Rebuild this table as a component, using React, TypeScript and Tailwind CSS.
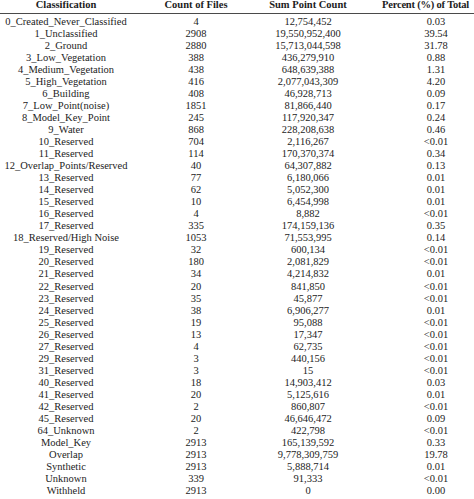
const rows: [string, string, string, string][] = [
  ["0_Created_Never_Classified", "4", "12,754,452", "0.03"],
  ["1_Unclassified", "2908", "19,550,952,400", "39.54"],
  ["2_Ground", "2880", "15,713,044,598", "31.78"],
  ["3_Low_Vegetation", "388", "436,279,910", "0.88"],
  ["4_Medium_Vegetation", "438", "648,639,388", "1.31"],
  ["5_High_Vegetation", "416", "2,077,043,309", "4.20"],
  ["6_Building", "408", "46,928,713", "0.09"],
  ["7_Low_Point(noise)", "1851", "81,866,440", "0.17"],
  ["8_Model_Key_Point", "245", "117,920,347", "0.24"],
  ["9_Water", "868", "228,208,638", "0.46"],
  ["10_Reserved", "704", "2,116,267", "<0.01"],
  ["11_Reserved", "114", "170,370,374", "0.34"],
  ["12_Overlap_Points/Reserved", "40", "64,307,882", "0.13"],
  ["13_Reserved", "77", "6,180,066", "0.01"],
  ["14_Reserved", "62", "5,052,300", "0.01"],
  ["15_Reserved", "10", "6,454,998", "0.01"],
  ["16_Reserved", "4", "8,882", "<0.01"],
  ["17_Reserved", "335", "174,159,136", "0.35"],
  ["18_Reserved/High Noise", "1053", "71,553,995", "0.14"],
  ["19_Reserved", "32", "600,134", "<0.01"],
  ["20_Reserved", "180", "2,081,829", "<0.01"],
  ["21_Reserved", "34", "4,214,832", "0.01"],
  ["22_Reserved", "20", "841,850", "<0.01"],
  ["23_Reserved", "35", "45,877", "<0.01"],
  ["24_Reserved", "38", "6,906,277", "0.01"],
  ["25_Reserved", "19", "95,088", "<0.01"],
  ["26_Reserved", "13", "17,347", "<0.01"],
  ["27_Reserved", "4", "62,735", "<0.01"],
  ["29_Reserved", "3", "440,156", "<0.01"],
  ["31_Reserved", "3", "15", "<0.01"],
  ["40_Reserved", "18", "14,903,412", "0.03"],
  ["41_Reserved", "20", "5,125,616", "0.01"],
  ["42_Reserved", "2", "860,807", "<0.01"],
  ["45_Reserved", "20", "46,646,472", "0.09"],
  ["64_Unknown", "2", "422,798", "<0.01"],
  ["Model_Key", "2913", "165,139,592", "0.33"],
  ["Overlap", "2913", "9,778,309,759", "19.78"],
  ["Synthetic", "2913", "5,888,714", "0.01"],
  ["Unknown", "339", "91,333", "<0.01"],
  ["Withheld", "2913", "0", "0.00"],
];

const cols = "grid grid-cols-[132px_128px_96px_160px]";

export default function App() {
  return (
    <div
      className="w-[474px] h-[499px] overflow-hidden bg-white text-[#1c1c1c] text-[10.5px]"
      style={{ fontFamily: '"Liberation Serif", serif' }}
    >
      <div className="w-[516px]">
        {/* Header */}
        <div className={`${cols} h-[14px] border-b border-[#4a4a4a] font-bold leading-[9px] text-center`}>
          <div>Classification</div>
          <div>Count of Files</div>
          <div>Sum Point Count</div>
          <div className="pl-[26px] text-left tracking-[-0.2px]">Percent (%) of Total</div>
        </div>

        {/* Rows */}
        <div className="pt-[1.5px]">
          {rows.map((r) => (
            <div key={r[0]} className={`${cols} h-[12.05px] leading-[12px] text-center`}>
              <div>{r[0]}</div>
              <div>{r[1]}</div>
              <div>{r[2]}</div>
              <div>{r[3]}</div>
            </div>
          ))}
        </div>
      </div>
    </div>
  );
}
